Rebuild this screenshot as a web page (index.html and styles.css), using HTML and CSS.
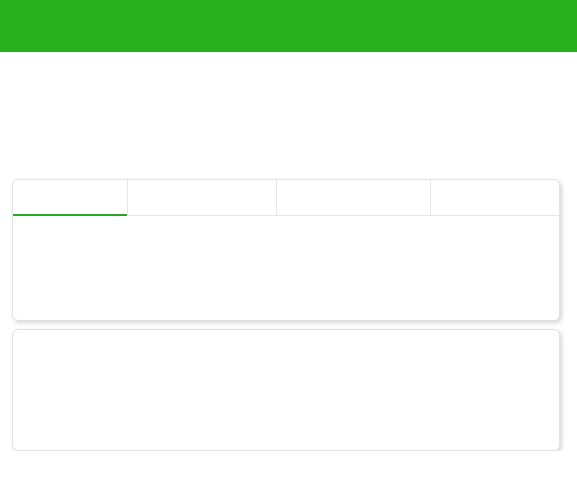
FILE: index.html
```html
<!DOCTYPE html>
<html lang="en">
<head>
<meta charset="utf-8">
<title>Tabs</title>
<link rel="stylesheet" href="styles.css">
</head>
<body>
<header class="topbar"></header>
<main class="content">
  <section class="card card-tabs">
    <nav class="tabs">
      <div class="tab tab-1 active"></div>
      <div class="tab tab-2"></div>
      <div class="tab tab-3"></div>
      <div class="tab tab-4"></div>
    </nav>
    <div class="tab-panel"></div>
  </section>
  <section class="card card-plain"></section>
</main>
</body>
</html>
```

FILE: styles.css
```css
* { box-sizing: border-box; }
html, body {
  margin: 0;
  padding: 0;
  background: #ffffff;
  font-family: "Liberation Sans", Arial, sans-serif;
}
.topbar {
  height: 52px;
  background: #28b01e;
}
.content {
  padding: 127px 17px 0 12px;
  display: flex;
  flex-direction: column;
  gap: 8px;
}
.card {
  background: #ffffff;
  border: 1px solid #e2e2e2;
  border-radius: 6px;
  box-shadow: 2px 2px 4px rgba(0, 0, 0, 0.16);
}
.card-tabs {
  height: 142px;
  display: flex;
  flex-direction: column;
  overflow: hidden;
}
.tabs {
  display: flex;
  height: 36px;
  border-bottom: 1px solid #e6e6e6;
}
.tab {
  height: 100%;
  border-right: 1px solid #e6e6e6;
  position: relative;
}
.tab-1 { width: 115px; }
.tab-2 { width: 149px; }
.tab-3 { width: 154px; }
.tab-4 { flex: 1; border-right: none; }
.tab.active::after {
  content: "";
  position: absolute;
  left: 0;
  right: 0;
  bottom: -1px;
  height: 2px;
  background: #28a825;
}
.tab-panel { flex: 1; }
.card-plain { height: 122px; }
```
